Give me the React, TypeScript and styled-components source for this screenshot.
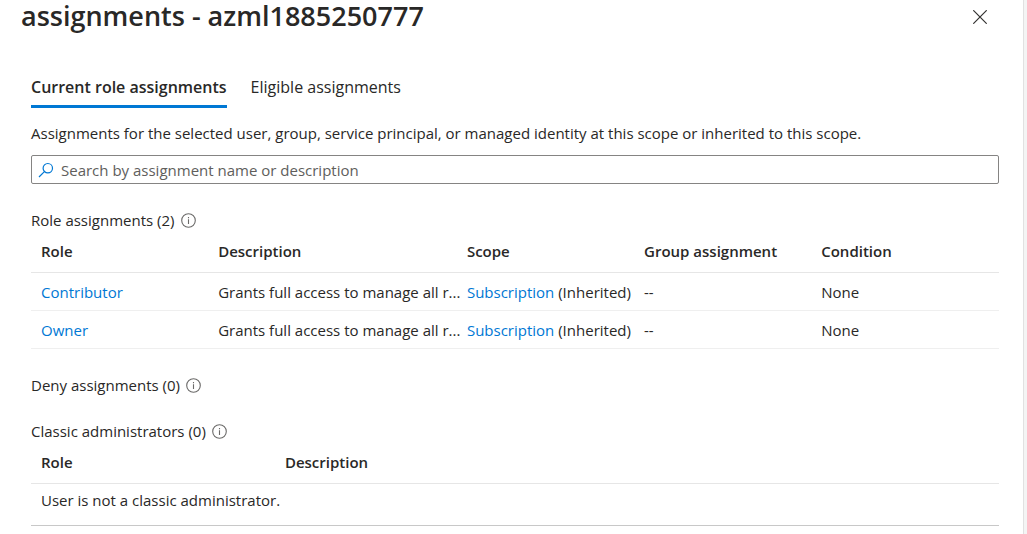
import React, { useState } from "react";
import styled, { createGlobalStyle } from "styled-components";

const GlobalStyle = createGlobalStyle`
  * { box-sizing: border-box; }
  body {
    margin: 0;
    background: #f4f4f4;
    color: #292827;
    font-family: "Segoe UI", "Open Sans", "Noto Sans", sans-serif;
    font-size: 15px;
    line-height: 20px;
  }
`;

const Panel = styled.main`
  min-height: 100vh;
  margin-right: 3px;
  padding-bottom: 7px;
  background: #fff;
  border-right: 1px solid #e1e1e1;
`;

const Header = styled.header`
  display: flex;
  align-items: flex-end;
  justify-content: space-between;
  padding: 0 33px 0 21px;
`;

const Title = styled.h1`
  margin: 0;
  font-size: 27px;
  line-height: 32px;
  font-weight: 600;
`;

const CloseButton = styled.button`
  display: flex;
  padding: 8px 3px;
  border: 0;
  background: none;
  color: #323130;
  cursor: pointer;
`;

const Content = styled.div`
  padding: 42px 24px 0 31px;
`;

const TabList = styled.div`
  display: flex;
  gap: 24px;
`;

const Tab = styled.button<{ $active: boolean }>`
  height: 34px;
  padding: 0 0 6px;
  border: 0;
  border-bottom: 3px solid ${(p) => (p.$active ? "#0078d4" : "transparent")};
  background: none;
  color: inherit;
  font: inherit;
  font-size: 16px;
  font-weight: ${(p) => (p.$active ? 600 : 400)};
  cursor: pointer;
`;

const Intro = styled.p`
  margin: 15px 0 12px;
`;

const SearchBox = styled.label`
  display: flex;
  align-items: center;
  gap: 7px;
  height: 29px;
  padding: 0 6px;
  border: 1px solid #858483;
  border-radius: 2px;
`;

const SearchInput = styled.input`
  flex: 1;
  min-width: 0;
  padding: 0;
  border: 0;
  outline: 0;
  background: none;
  color: inherit;
  font: inherit;
  &::placeholder { color: #605e5c; opacity: 1; }
`;

const Section = styled.section`
  margin-top: 26px;
`;

const SectionTitle = styled.h2`
  display: flex;
  align-items: center;
  gap: 6px;
  margin: 0;
  font-size: 15px;
  line-height: 20px;
  font-weight: 400;
`;

const InfoButton = styled.button`
  display: flex;
  padding: 0;
  border: 0;
  background: none;
  color: #6b6a69;
  cursor: pointer;
`;

const Table = styled.table<{ $closed?: boolean }>`
  width: 100%;
  margin-bottom: 1px;
  table-layout: fixed;
  border-collapse: separate;
  border-spacing: 0;
  border-bottom: ${(p) => (p.$closed ? "1px solid #c8c8c8" : "0")};
`;

const HeadCell = styled.th<{ $width: string }>`
  width: ${(p) => p.$width};
  height: 43px;
  padding: 0 0 0 10px;
  border-bottom: 1px solid #e6e6e6;
  text-align: left;
  font-weight: 600;
  white-space: nowrap;
`;

const Cell = styled.td`
  height: 38px;
  padding: 0 0 0 10px;
  border-bottom: 1px solid #efefef;
  white-space: nowrap;
`;

const EmptyCell = styled.td`
  height: 41px;
  padding: 0 0 10px 10px;
`;

const Link = styled.a`
  color: #0078d4;
  text-decoration: none;
`;

const InfoIcon = () => (
  <svg width="15" height="15" viewBox="0 0 15 15" fill="none" stroke="currentColor" aria-hidden="true">
    <circle cx="7.5" cy="7.5" r="6.8" strokeWidth="1.1" />
    <path d="M7.5 6.2v4.8M7.5 4v1.2" strokeWidth="1.1" />
  </svg>
);

const SearchIcon = () => (
  <svg width="16" height="16" viewBox="0 0 16 16" fill="none" stroke="#0078d4" strokeWidth="1.2" aria-hidden="true">
    <circle cx="9.8" cy="6.2" r="4.7" />
    <path d="M6.4 9.6L1 15" />
  </svg>
);

const CloseIcon = () => (
  <svg width="14" height="14" viewBox="0 0 14 14" fill="none" stroke="currentColor" strokeWidth="1.2" aria-hidden="true">
    <path d="M0.3 0.3l13.4 13.4M13.7 0.3L0.3 13.7" />
  </svg>
);

const SectionHeading = ({ label, count }: { label: string; count: number }) => (
  <SectionTitle>
    {label} ({count})
    <InfoButton type="button" aria-label={`About ${label.toLowerCase()}`}>
      <InfoIcon />
    </InfoButton>
  </SectionTitle>
);

const roleColumns = [
  { name: "Role", width: "18.3%" },
  { name: "Description", width: "25.7%" },
  { name: "Scope", width: "18.3%" },
  { name: "Group assignment", width: "18.3%" },
  { name: "Condition", width: "19.4%" },
];

const roles = [
  { role: "Contributor", description: "Grants full access to manage all r..." },
  { role: "Owner", description: "Grants full access to manage all r..." },
];

const tabs = ["Current role assignments", "Eligible assignments"];

export default function App() {
  const [active, setActive] = useState(0);
  const [query, setQuery] = useState("");
  const shown = roles.filter((r) =>
    `${r.role} ${r.description}`.toLowerCase().includes(query.toLowerCase())
  );

  return (
    <>
      <GlobalStyle />
      <Panel>
        <Header>
          <Title>assignments - azml1885250777</Title>
          <CloseButton type="button" aria-label="Close">
            <CloseIcon />
          </CloseButton>
        </Header>
        <Content>
          <TabList role="tablist">
            {tabs.map((tab, i) => (
              <Tab
                key={tab}
                type="button"
                role="tab"
                aria-selected={active === i}
                $active={active === i}
                onClick={() => setActive(i)}
              >
                {tab}
              </Tab>
            ))}
          </TabList>
          <Intro>
            Assignments for the selected user, group, service principal, or managed identity at this
            scope or inherited to this scope.
          </Intro>
          <SearchBox>
            <SearchIcon />
            <SearchInput
              type="text"
              aria-label="Search assignments"
              placeholder="Search by assignment name or description"
              value={query}
              onChange={(e) => setQuery(e.target.value)}
            />
          </SearchBox>
          <Section>
            <SectionHeading label="Role assignments" count={2} />
            <Table>
              <thead>
                <tr>
                  {roleColumns.map((c) => (
                    <HeadCell key={c.name} scope="col" $width={c.width}>
                      {c.name}
                    </HeadCell>
                  ))}
                </tr>
              </thead>
              <tbody>
                {shown.map((r) => (
                  <tr key={r.role}>
                    <Cell>
                      <Link href="#role">{r.role}</Link>
                    </Cell>
                    <Cell>{r.description}</Cell>
                    <Cell>
                      <Link href="#scope">Subscription</Link> (Inherited)
                    </Cell>
                    <Cell>--</Cell>
                    <Cell>None</Cell>
                  </tr>
                ))}
              </tbody>
            </Table>
          </Section>
          <Section>
            <SectionHeading label="Deny assignments" count={0} />
          </Section>
          <Section>
            <SectionHeading label="Classic administrators" count={0} />
            <Table $closed>
              <thead>
                <tr>
                  <HeadCell scope="col" $width="25.2%">Role</HeadCell>
                  <HeadCell scope="col" $width="74.8%">Description</HeadCell>
                </tr>
              </thead>
              <tbody>
                <tr>
                  <EmptyCell colSpan={2}>User is not a classic administrator.</EmptyCell>
                </tr>
              </tbody>
            </Table>
          </Section>
        </Content>
      </Panel>
    </>
  );
}
